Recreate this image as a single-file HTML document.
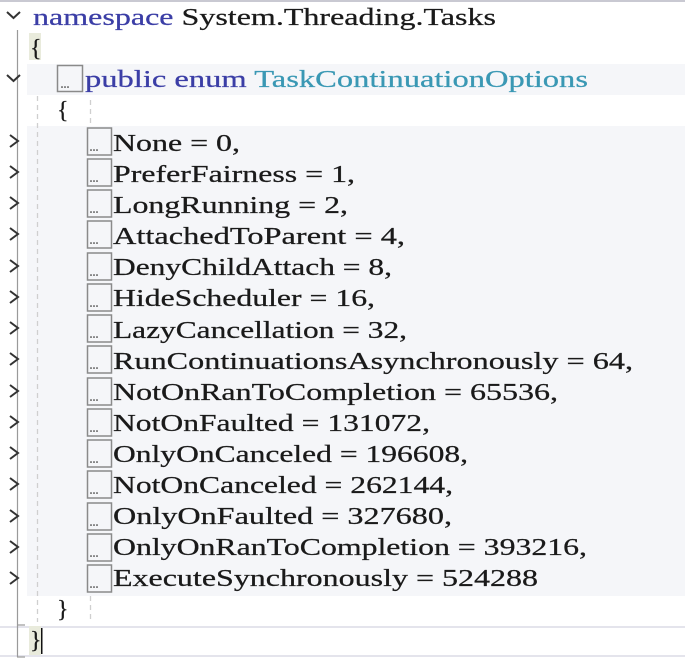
<!DOCTYPE html>
<html><head><meta charset="utf-8"><style>
html,body{margin:0;padding:0;background:#fff;width:685px;height:659px;overflow:hidden}
svg{display:block}
text{font-family:"Liberation Serif",serif;font-size:24px;fill:#1a1a1a;stroke:#1a1a1a;stroke-width:0.25}
.kw{fill:#3b3ea6;stroke:#3b3ea6}.ty{fill:#3a98b4;stroke:#3a98b4}
.box{fill:none;stroke:#8a8a8a;stroke-width:1.5}
text.dots{font-size:16px;fill:#666;stroke:none;letter-spacing:-1px}
</style></head><body>
<svg width="685" height="659" viewBox="0 0 685 659" xmlns="http://www.w3.org/2000/svg">
<rect x="0" y="0" width="685" height="2" fill="#c9c9d2"/>
<rect x="27" y="64" width="658" height="31" fill="#f5f6f9"/>
<rect x="27" y="126" width="658" height="470" fill="#f5f6f9"/>
<rect x="0" y="626" width="685" height="2" fill="#e4e4ec"/>
<rect x="0" y="655" width="685" height="2" fill="#e4e4ec"/>
<rect x="29" y="33" width="12" height="27" fill="#e9ebdc"/>
<rect x="29" y="626" width="12" height="29" fill="#e9ebdc"/>
<line x1="17.5" y1="30" x2="17.5" y2="657" stroke="#9a9a9a" stroke-width="1.2"/>
<line x1="17" y1="625" x2="25" y2="625" stroke="#9a9a9a" stroke-width="1.2"/>
<line x1="17" y1="657" x2="25" y2="657" stroke="#9a9a9a" stroke-width="1.2"/>
<line x1="37.5" y1="96" x2="37.5" y2="622" stroke="#cfcfcf" stroke-width="1.3" stroke-dasharray="5,4"/>
<line x1="90.5" y1="100" x2="90.5" y2="126" stroke="#cfcfcf" stroke-width="1.3" stroke-dasharray="5,4"/>
<line x1="90.5" y1="596" x2="90.5" y2="622" stroke="#cfcfcf" stroke-width="1.3" stroke-dasharray="5,4"/>
<g fill="none" stroke="#333" stroke-width="2">
<path d="M7 12 L13.5 18 L20 12"/>
<path d="M7 75 L13.5 81 L20 75"/>
</g>
<text x="33" y="25" textLength="463" lengthAdjust="spacingAndGlyphs"><tspan class="kw">namespace</tspan> System.Threading.Tasks</text>
<text x="30" y="56">{</text>
<rect x="57.5" y="65.5" width="25" height="26" class="box"/>
<text x="60" y="88" class="dots">...</text>
<text x="85" y="87" textLength="503" lengthAdjust="spacingAndGlyphs"><tspan class="kw">public enum</tspan> <tspan class="ty">TaskContinuationOptions</tspan></text>
<text x="57" y="118">{</text>
<text x="57" y="617">}</text>
<text x="30" y="648">}</text>
<rect x="41" y="628" width="1.5" height="26" fill="#111"/>
<g>
<text x="113" y="151" textLength="127" lengthAdjust="spacingAndGlyphs">None = 0,</text>
<text x="113" y="182" textLength="242" lengthAdjust="spacingAndGlyphs">PreferFairness = 1,</text>
<text x="113" y="213" textLength="235" lengthAdjust="spacingAndGlyphs">LongRunning = 2,</text>
<text x="113" y="244" textLength="292" lengthAdjust="spacingAndGlyphs">AttachedToParent = 4,</text>
<text x="113" y="275" textLength="279" lengthAdjust="spacingAndGlyphs">DenyChildAttach = 8,</text>
<text x="113" y="306" textLength="262" lengthAdjust="spacingAndGlyphs">HideScheduler = 16,</text>
<text x="113" y="338" textLength="294" lengthAdjust="spacingAndGlyphs">LazyCancellation = 32,</text>
<text x="113" y="369" textLength="520" lengthAdjust="spacingAndGlyphs">RunContinuationsAsynchronously = 64,</text>
<text x="113" y="400" textLength="445" lengthAdjust="spacingAndGlyphs">NotOnRanToCompletion = 65536,</text>
<text x="113" y="431" textLength="317" lengthAdjust="spacingAndGlyphs">NotOnFaulted = 131072,</text>
<text x="113" y="462" textLength="355" lengthAdjust="spacingAndGlyphs">OnlyOnCanceled = 196608,</text>
<text x="113" y="493" textLength="340" lengthAdjust="spacingAndGlyphs">NotOnCanceled = 262144,</text>
<text x="113" y="524" textLength="339" lengthAdjust="spacingAndGlyphs">OnlyOnFaulted = 327680,</text>
<text x="113" y="555" textLength="474" lengthAdjust="spacingAndGlyphs">OnlyOnRanToCompletion = 393216,</text>
<text x="113" y="586" textLength="425" lengthAdjust="spacingAndGlyphs">ExecuteSynchronously = 524288</text>
</g>
<g>
<rect x="87.5" y="128" width="24" height="27" class="box"/><text x="89" y="151" class="dots">...</text>
<rect x="87.5" y="159" width="24" height="27" class="box"/><text x="89" y="182" class="dots">...</text>
<rect x="87.5" y="190" width="24" height="27" class="box"/><text x="89" y="213" class="dots">...</text>
<rect x="87.5" y="221" width="24" height="27" class="box"/><text x="89" y="244" class="dots">...</text>
<rect x="87.5" y="253" width="24" height="27" class="box"/><text x="89" y="276" class="dots">...</text>
<rect x="87.5" y="284" width="24" height="27" class="box"/><text x="89" y="307" class="dots">...</text>
<rect x="87.5" y="315" width="24" height="27" class="box"/><text x="89" y="338" class="dots">...</text>
<rect x="87.5" y="346" width="24" height="27" class="box"/><text x="89" y="369" class="dots">...</text>
<rect x="87.5" y="378" width="24" height="27" class="box"/><text x="89" y="401" class="dots">...</text>
<rect x="87.5" y="409" width="24" height="27" class="box"/><text x="89" y="432" class="dots">...</text>
<rect x="87.5" y="440" width="24" height="27" class="box"/><text x="89" y="463" class="dots">...</text>
<rect x="87.5" y="471" width="24" height="27" class="box"/><text x="89" y="494" class="dots">...</text>
<rect x="87.5" y="503" width="24" height="27" class="box"/><text x="89" y="526" class="dots">...</text>
<rect x="87.5" y="534" width="24" height="27" class="box"/><text x="89" y="557" class="dots">...</text>
<rect x="87.5" y="565" width="24" height="27" class="box"/><text x="89" y="588" class="dots">...</text>
</g>
<g fill="none" stroke="#333" stroke-width="2">
<path d="M10 135 L18 141 L10 147"/>
<path d="M10 166 L18 172 L10 178"/>
<path d="M10 197 L18 203 L10 209"/>
<path d="M10 228 L18 234 L10 240"/>
<path d="M10 260 L18 266 L10 272"/>
<path d="M10 291 L18 297 L10 303"/>
<path d="M10 322 L18 328 L10 334"/>
<path d="M10 353 L18 359 L10 365"/>
<path d="M10 385 L18 391 L10 397"/>
<path d="M10 416 L18 422 L10 428"/>
<path d="M10 447 L18 453 L10 459"/>
<path d="M10 478 L18 484 L10 490"/>
<path d="M10 510 L18 516 L10 522"/>
<path d="M10 541 L18 547 L10 553"/>
<path d="M10 572 L18 578 L10 584"/>
</g>
</svg>
</body></html>
